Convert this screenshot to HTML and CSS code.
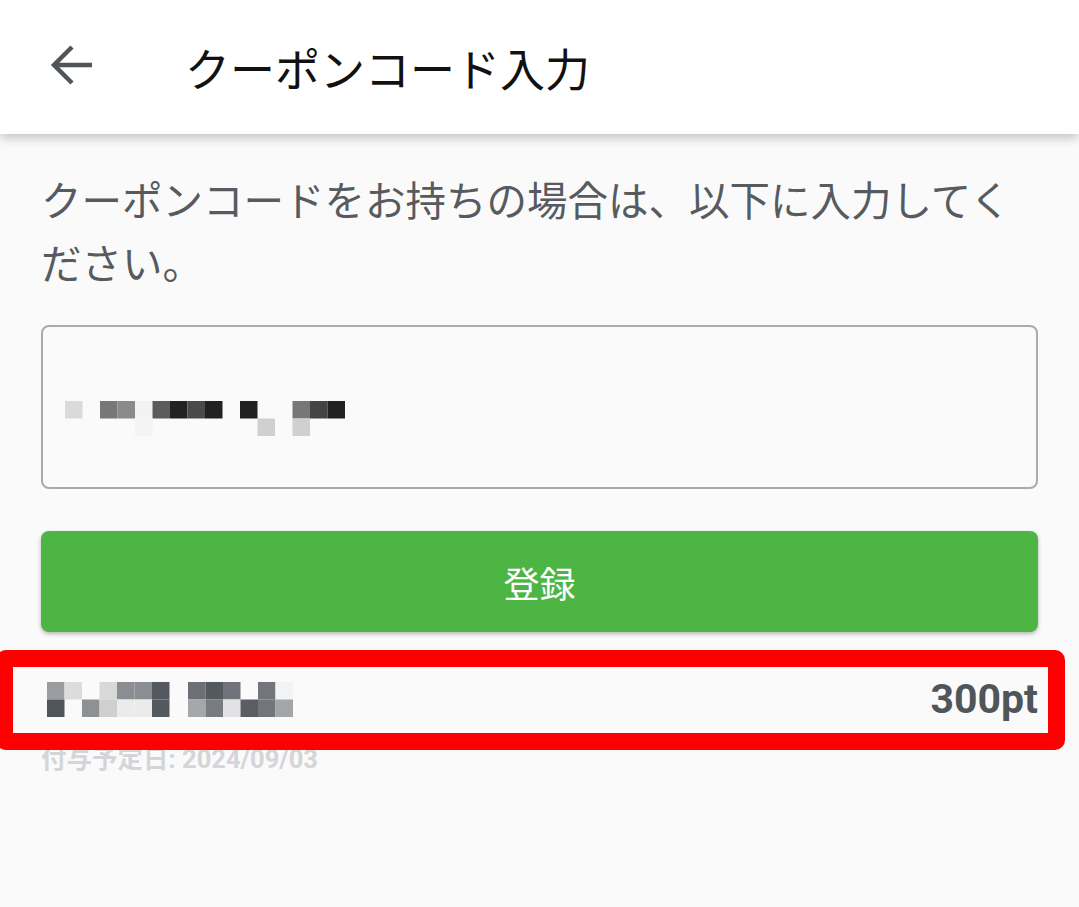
FILE: index.html
```html
<!DOCTYPE html>
<html lang="ja">
<head>
<meta charset="utf-8">
<title>クーポンコード入力</title>
<link rel="stylesheet" href="styles.css">
</head>
<body>
<header class="appbar">
  <svg class="back" width="44" height="44" viewBox="0 0 44 44" aria-label="戻る">
    <path d="M42 22 H5 M22 4 L4 22 L22 40" fill="none" stroke="#50555a" stroke-width="4.5"/>
  </svg>
  <h1 class="title">クーポンコード入力</h1>
</header>
<main class="content">
  <p class="lead">クーポンコードをお持ちの場合は、以下に入力してください。</p>
  <div class="field">
    <svg class="mosaic" width="281" height="35" viewBox="0 0 281 35">
      <rect x="0" y="0" width="17.5" height="17.5" fill="#dadada"/>
      <rect x="35" y="0" width="17.5" height="17.5" fill="#777777"/>
      <rect x="52.5" y="0" width="17.5" height="17.5" fill="#8a8a8a"/>
      <rect x="70" y="0" width="17.5" height="17.5" fill="#f2f2f2"/>
      <rect x="87.5" y="0" width="17.5" height="17.5" fill="#5c5c5c"/>
      <rect x="105" y="0" width="17.5" height="17.5" fill="#222222"/>
      <rect x="122.5" y="0" width="17.5" height="17.5" fill="#4a4a4a"/>
      <rect x="140" y="0" width="17.5" height="17.5" fill="#222222"/>
      <rect x="175" y="0" width="17.5" height="17.5" fill="#222222"/>
      <rect x="227.5" y="0" width="17.5" height="17.5" fill="#777777"/>
      <rect x="245" y="0" width="17.5" height="17.5" fill="#444444"/>
      <rect x="262.5" y="0" width="17.5" height="17.5" fill="#222222"/>
      <rect x="70" y="17.5" width="17.5" height="17.5" fill="#f4f4f4"/>
      <rect x="192.5" y="17.5" width="17.5" height="17.5" fill="#d0d0d0"/>
      <rect x="227.5" y="17.5" width="17.5" height="17.5" fill="#d0d0d0"/>
    </svg>
  </div>
  <button class="submit" type="button">登録</button>
  <section class="history">
    <div class="item">
      <svg class="mosaic name" width="246" height="35" viewBox="0 0 246 35">
        <rect x="0" y="0" width="17.5" height="17.5" fill="#9a9ca0"/>
        <rect x="17.5" y="0" width="17.5" height="17.5" fill="#dcdcdc"/>
        <rect x="52.5" y="0" width="17.5" height="17.5" fill="#d8d8d8"/>
        <rect x="70" y="0" width="17.5" height="17.5" fill="#8a8d92"/>
        <rect x="87.5" y="0" width="17.5" height="17.5" fill="#8a8d92"/>
        <rect x="105" y="0" width="17.5" height="17.5" fill="#545960"/>
        <rect x="141" y="0" width="17.5" height="17.5" fill="#6c7076"/>
        <rect x="158.5" y="0" width="17.5" height="17.5" fill="#545960"/>
        <rect x="176" y="0" width="17.5" height="17.5" fill="#70747a"/>
        <rect x="211" y="0" width="17.5" height="17.5" fill="#72767b"/>
        <rect x="228.5" y="0" width="17.5" height="17.5" fill="#f3f3f3"/>
        <rect x="0" y="17.5" width="17.5" height="17.5" fill="#50545b"/>
        <rect x="35" y="17.5" width="17.5" height="17.5" fill="#8d9095"/>
        <rect x="52.5" y="17.5" width="17.5" height="17.5" fill="#cfcfcf"/>
        <rect x="70" y="17.5" width="17.5" height="17.5" fill="#ebebeb"/>
        <rect x="87.5" y="17.5" width="17.5" height="17.5" fill="#ebebeb"/>
        <rect x="105" y="17.5" width="17.5" height="17.5" fill="#545960"/>
        <rect x="141" y="17.5" width="17.5" height="17.5" fill="#a5a7aa"/>
        <rect x="158.5" y="17.5" width="17.5" height="17.5" fill="#787c82"/>
        <rect x="176" y="17.5" width="17.5" height="17.5" fill="#e2e2e4"/>
        <rect x="193.5" y="17.5" width="17.5" height="17.5" fill="#5a5e64"/>
        <rect x="211" y="17.5" width="17.5" height="17.5" fill="#72767b"/>
        <rect x="228.5" y="17.5" width="17.5" height="17.5" fill="#a3a6a8"/>
      </svg>
      <span class="points">300pt</span>
    </div>
    <div class="date">付与予定日: 2024/09/03</div>
    <div class="highlight"></div>
  </section>
</main>
</body>
</html>
```

FILE: styles.css
```css
html, body {
  margin: 0;
  padding: 0;
}
body {
  background: #fafafa;
  font-family: "Noto Sans CJK JP", "Noto Sans", sans-serif;
  width: 1079px;
  height: 907px;
  overflow: hidden;
}
.appbar {
  position: relative;
  z-index: 2;
  height: 134px;
  background: #ffffff;
  display: flex;
  align-items: center;
  padding-left: 50px;
  box-shadow: 0 4px 10px rgba(0, 0, 0, 0.22);
}
.back {
  display: block;
  flex: none;
  margin-top: -4px;
}
.title {
  margin: 0 0 0 91px;
  font-size: 45px;
  font-weight: 400;
  color: #111111;
  line-height: 1;
}
.content {
  padding: 0 41px;
}
.lead {
  margin: 33px 0 0;
  font-size: 40.5px;
  line-height: 63px;
  color: #575b60;
}
.field {
  margin-top: 32px;
  height: 160px;
  border: 2px solid #aaaaaa;
  border-radius: 8px;
  background: #fafafa;
  box-sizing: content-box;
  padding: 0;
}
.field .mosaic {
  display: block;
  margin: 74px 0 0 22px;
}
.submit {
  display: block;
  width: 100%;
  height: 101px;
  margin-top: 42px;
  border: none;
  border-radius: 8px;
  background: #4cb543;
  color: #ffffff;
  font-family: "Noto Sans CJK JP", sans-serif;
  font-size: 36px;
  box-shadow: 0 2px 4px rgba(0, 0, 0, 0.28);
  padding: 0;
}
.history {
  position: relative;
  margin-top: 33px;
}
.item {
  height: 68px;
  display: flex;
  align-items: center;
  justify-content: space-between;
}
.item .name {
  display: block;
  margin-left: 6px;
}
.points {
  font-family: Roboto, "Noto Sans CJK JP", sans-serif;
  font-weight: 700;
  font-size: 41px;
  color: #50555a;
}
.date {
  margin-top: 11px;
  font-family: Roboto, "Noto Sans CJK JP", sans-serif;
  font-weight: 700;
  font-size: 25.5px;
  line-height: 30px;
  color: #d3d5d8;
}
.highlight {
  position: absolute;
  left: -45px;
  top: -15px;
  width: 1069px;
  height: 100px;
  box-sizing: border-box;
  border: 17px solid #ff0000;
  border-radius: 10px;
}
```
